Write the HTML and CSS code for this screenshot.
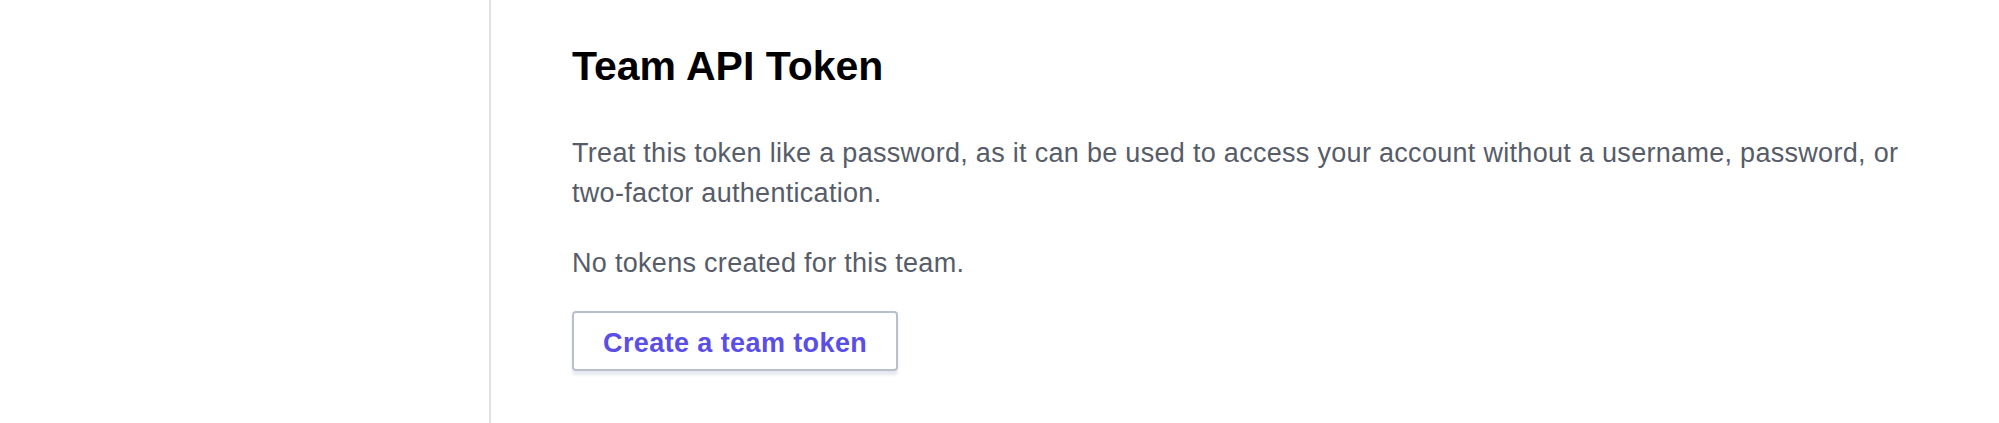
FILE: index.html
```html
<!DOCTYPE html>
<html lang="en">
<head>
    <meta charset="UTF-8">
    <meta name="viewport" content="width=device-width, initial-scale=1.0">
    <title>Team API Token</title>
    <link rel="stylesheet" href="styles.css">
</head>
<body>
    <div class="page">
        <div class="sidebar"></div>

        <div class="content">
            <h2 class="title">Team API Token</h2>
            <p class="text">Treat this token like a password, as it can be used to access your account without a username, password, or two-factor authentication.</p>
            <p class="text empty">No tokens created for this team.</p>
            <a href="#" class="create">Create a team token</a>
        </div>
    </div>
</body>
</html>
```

FILE: styles.css
```css
body {
margin: 0;
background-color: #fff;
font-family: "Liberation Sans", Arial, sans-serif;
}

.page {
display: flex;
height: 423px;
}

.sidebar {
width: 489px;
border-right: solid 2px #dde1e9;
flex-shrink: 0;
}

.content {
padding: 42px 0 0 81px;
width: 1340px;
}

.title {
margin: 0;
font-size: 41px;
line-height: 48px;
font-weight: bold;
color: #000;
}

.text {
margin: 43px 0 0;
font-size: 27px;
line-height: 40px;
letter-spacing: 0.3px;
color: #575c69;
}

.empty {
margin-top: 30px;
}

.create {
display: inline-block;
margin-top: 28px;
padding: 10px 29px 6px;
border: solid 2px #b9bfcd;
border-radius: 4px;
box-shadow: 0 4px 3px #e6e9ee;
font-size: 27px;
line-height: 40px;
letter-spacing: 0.4px;
font-weight: bold;
color: #5a4ee6;
text-decoration: none;
}
```
